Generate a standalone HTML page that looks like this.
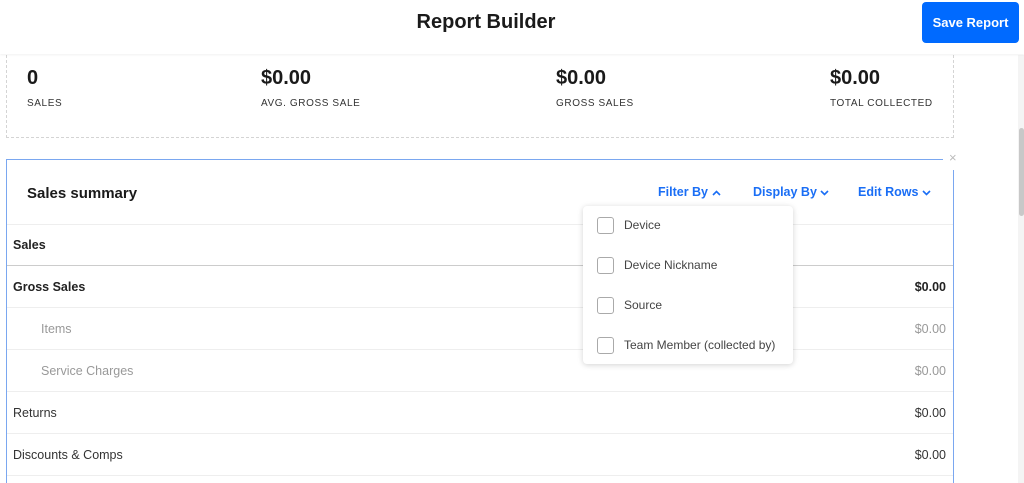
<!DOCTYPE html>
<html style="overflow:hidden;height:483px"><head><style>
*{margin:0;padding:0;box-sizing:border-box}
body{width:1024px;height:483px;overflow:hidden;background:#fff;font-family:"Liberation Sans",sans-serif;color:#222;position:relative}
.a{position:absolute;white-space:nowrap}
.hdr{position:absolute;left:0;top:0;width:1024px;height:54px;background:#fff;box-shadow:0 1px 2px rgba(0,0,0,.06);z-index:5}
.btn{position:absolute;left:922px;top:2px;width:97px;height:41px;background:#006aff;border-radius:4px;color:#fff;font-weight:bold;font-size:13px;text-align:center;line-height:41px}
.stats{position:absolute;left:6px;top:40px;width:948px;height:98px;border:1px dashed #d4d4d4}
.v{font-size:20px;font-weight:bold;color:#1a1a1a}
.l{font-size:10px;letter-spacing:.6px;color:#333}
.box{position:absolute;left:6px;top:159px;width:1px;height:324px;background:#7aa7f0}
.tb{position:absolute;left:6px;top:159px;width:937px;height:1px;background:#7aa7f0}
.rb{position:absolute;left:953px;top:170px;width:1px;height:313px;background:#7aa7f0}
.sep{position:absolute;left:7px;width:946px;height:1px;background:#eee}
.r{font-size:12.5px;color:#333}
.g{color:#999}
.blue{color:#1a6ef5;font-size:12.5px;font-weight:bold}
.dd{position:absolute;left:583px;top:206px;width:210px;height:158px;background:#fff;border-radius:4px;box-shadow:0 1px 6px rgba(0,0,0,.18);z-index:3}
.cb{position:absolute;left:14px;width:17px;height:17px;border:1.5px solid #aaa;border-radius:3px}
.dt{position:absolute;left:41px;font-size:12px;color:#444}
.sb{position:absolute;left:1018px;top:55px;width:6px;height:428px;background:#f4f4f4}
.th{position:absolute;left:1019px;top:128px;width:5px;height:88px;background:#c8c8c8;border-radius:3px}
svg{vertical-align:middle}
</style></head><body>
<div class="hdr"><div class="a" style="left:0;width:972px;text-align:center;top:11px;font-size:20px;font-weight:bold;color:#1a1a1a">Report Builder</div><div class="btn">Save Report</div></div>
<div class="stats"></div>
<div class="a v" style="left:27px;top:67px">0</div><div class="a l" style="left:27px;top:98px">SALES</div>
<div class="a v" style="left:261px;top:67px">$0.00</div><div class="a l" style="left:261px;top:98px">AVG. GROSS SALE</div>
<div class="a v" style="left:556px;top:67px">$0.00</div><div class="a l" style="left:556px;top:98px">GROSS SALES</div>
<div class="a v" style="left:830px;top:67px">$0.00</div><div class="a l" style="left:830px;top:98px">TOTAL COLLECTED</div>
<div class="box"></div><div class="tb"></div><div class="rb"></div>
<div class="a" style="left:949px;top:150px;font-size:13px;color:#bbb">×</div>
<div class="a" style="left:27px;top:185px;font-size:15px;font-weight:bold;color:#1a1a1a">Sales summary</div>
<div class="a blue" style="left:658px;top:185px">Filter By <svg width="9" height="6"><path d="M1 5 L4.5 1.5 L8 5" fill="none" stroke="#1a6ef5" stroke-width="1.6"/></svg></div>
<div class="a blue" style="left:753px;top:185px">Display By <svg width="9" height="6"><path d="M1 1 L4.5 4.5 L8 1" fill="none" stroke="#1a6ef5" stroke-width="1.6"/></svg></div>
<div class="a blue" style="left:858px;top:185px">Edit Rows <svg width="9" height="6"><path d="M1 1 L4.5 4.5 L8 1" fill="none" stroke="#1a6ef5" stroke-width="1.6"/></svg></div>
<div class="sep" style="top:224px"></div>
<div class="a r" style="left:13px;top:238px;font-weight:bold;color:#222">Sales</div>
<div class="sep" style="top:265px;background:#ccc"></div>
<div class="a r" style="left:13px;top:280px;font-weight:bold;color:#222">Gross Sales</div><div class="a r" style="right:78px;top:280px;font-weight:bold;color:#222">$0.00</div>
<div class="sep" style="top:307px"></div>
<div class="a r g" style="left:41px;top:322px">Items</div><div class="a r g" style="right:78px;top:322px">$0.00</div>
<div class="sep" style="top:349px"></div>
<div class="a r g" style="left:41px;top:364px">Service Charges</div><div class="a r g" style="right:78px;top:364px">$0.00</div>
<div class="sep" style="top:391px"></div>
<div class="a r" style="left:13px;top:406px">Returns</div><div class="a r" style="right:78px;top:406px">$0.00</div>
<div class="sep" style="top:433px"></div>
<div class="a r" style="left:13px;top:448px">Discounts &amp; Comps</div><div class="a r" style="right:78px;top:448px">$0.00</div>
<div class="sep" style="top:475px"></div>
<div class="dd">
<div class="cb" style="top:11px"></div><div class="dt" style="top:12px">Device</div>
<div class="cb" style="top:51px"></div><div class="dt" style="top:52px">Device Nickname</div>
<div class="cb" style="top:91px"></div><div class="dt" style="top:92px">Source</div>
<div class="cb" style="top:131px"></div><div class="dt" style="top:132px">Team Member (collected by)</div>
</div>
<div class="sb"></div><div class="th"></div>
</body></html>
